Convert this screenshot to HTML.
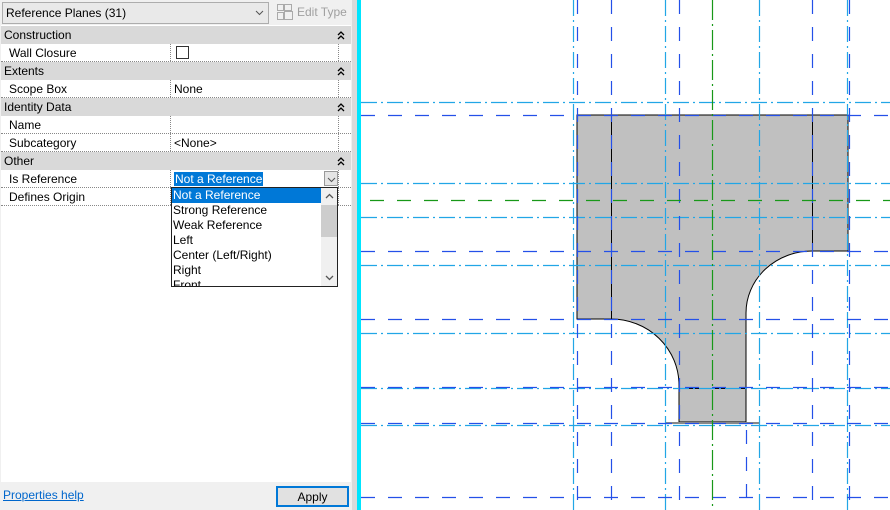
<!DOCTYPE html>
<html><head><style>
*{margin:0;padding:0;box-sizing:border-box}
body{width:890px;height:510px;overflow:hidden;background:#fff;font-family:"Liberation Sans",sans-serif;font-size:12px;color:#000;position:relative}
.a{position:absolute}
.hdr{position:absolute;left:1px;width:350px;height:18px;background:#d9d9d9;padding:2px 0 0 3px}
.hdr svg{position:absolute;right:6px;top:5px}
.row{position:absolute;left:1px;width:350px;height:18px;background:#fff;border-bottom:1px dotted #888}
.row .l{position:absolute;left:8px;top:2px}
.row .v{position:absolute;left:169px;top:0;height:17px;border-left:1px dotted #888;padding:2px 0 0 3px;width:168px}
.row .r{position:absolute;left:337px;top:0;height:17px;border-left:1px dotted #888;width:13px}
.dd div{height:15px;line-height:15px;padding-left:1px}
.lt{stroke:#22a6e6;stroke-width:1.2;stroke-dasharray:16 4 2 4;fill:none}
.dk{stroke:#2450e8;stroke-width:1.2;stroke-dasharray:14 13;fill:none}
.gr{stroke:#189818;stroke-width:1.2;stroke-dasharray:14 13;fill:none}
</style></head><body>
<div class="a" style="left:0;top:0;width:352px;height:510px;background:#f0f0f0"></div>
<div class="a" style="left:1px;top:25px;width:350px;height:457px;background:#fff"></div>
<div class="a" style="left:352px;top:0;width:5px;height:510px;background:#dadada"></div>
<div class="a" style="left:357px;top:0;width:4px;height:510px;background:#00e5ff"></div>
<div class="a" style="left:2px;top:2px;width:267px;height:22px;border:1px solid #adadad;background:#e9e9e9;padding:3px 0 0 3px">Reference Planes (31)<svg class="a" style="left:252px;top:7px" width="9" height="6"><path d="M1 1L4.5 4.5L8 1" fill="none" stroke="#555"/></svg></div>
<svg class="a" style="left:276px;top:3px" width="18" height="18"><rect x="1.5" y="1.5" width="6" height="6" fill="none" stroke="#aaa"/><rect x="1.5" y="9.5" width="6" height="7" fill="none" stroke="#aaa"/><rect x="8.5" y="1.5" width="7" height="6" fill="none" stroke="#aaa"/><rect x="8.5" y="8.5" width="8" height="8" fill="none" stroke="#aaa"/></svg>
<div class="a" style="left:297px;top:5px;color:#a0a0a0">Edit Type</div>

<div class="hdr" style="top:26px">Construction<svg width="8" height="9"><path d="M1 4L4 1L7 4M1 8L4 5L7 8" fill="none" stroke="#000" stroke-width="1.3"/></svg></div>
<div class="row" style="top:44px"><span class="l">Wall Closure</span><span class="v"><span class="a" style="left:5px;top:2px;width:13px;height:13px;border:1px solid #333"></span></span><span class="r"></span></div>
<div class="hdr" style="top:62px">Extents<svg width="8" height="9"><path d="M1 4L4 1L7 4M1 8L4 5L7 8" fill="none" stroke="#000" stroke-width="1.3"/></svg></div>
<div class="row" style="top:80px"><span class="l">Scope Box</span><span class="v">None</span><span class="r"></span></div>
<div class="hdr" style="top:98px">Identity Data<svg width="8" height="9"><path d="M1 4L4 1L7 4M1 8L4 5L7 8" fill="none" stroke="#000" stroke-width="1.3"/></svg></div>
<div class="row" style="top:116px"><span class="l">Name</span><span class="v"></span><span class="r"></span></div>
<div class="row" style="top:134px"><span class="l">Subcategory</span><span class="v">&lt;None&gt;</span><span class="r"></span></div>
<div class="hdr" style="top:152px">Other<svg width="8" height="9"><path d="M1 4L4 1L7 4M1 8L4 5L7 8" fill="none" stroke="#000" stroke-width="1.3"/></svg></div>
<div class="row" style="top:170px"><span class="l">Is Reference</span><span class="v"><span style="background:#0078d7;color:#fff;padding:0 1px">Not a Reference</span><span class="a" style="left:153px;top:1px;width:14px;height:15px;border:1px solid #999;background:#e5e5e5"><svg class="a" style="left:2px;top:5px" width="9" height="6"><path d="M1 1L4.5 4.5L8 1" fill="none" stroke="#555"/></svg></span></span><span class="r"></span></div>
<div class="row" style="top:188px"><span class="l">Defines Origin</span><span class="v"></span><span class="r"></span></div>

<div class="a dd" style="left:171px;top:187px;width:167px;height:100px;border:1px solid #222;background:#fff;overflow:hidden">
<div style="background:#0078d7;color:#fff;width:149px">Not a Reference</div>
<div>Strong Reference</div><div>Weak Reference</div><div>Left</div><div>Center (Left/Right)</div><div>Right</div><div>Front</div>
<div class="a" style="left:149px;top:0;width:16px;height:98px;background:#f0f0f0"></div>
<div class="a" style="left:149px;top:17px;width:16px;height:32px;background:#cdcdcd"></div>
<svg class="a" style="left:153px;top:5px" width="9" height="6"><path d="M1 5L4.5 1.5L8 5" fill="none" stroke="#555" stroke-width="1.3"/></svg>
<svg class="a" style="left:153px;top:87px" width="9" height="6"><path d="M1 1L4.5 4.5L8 1" fill="none" stroke="#555" stroke-width="1.3"/></svg>
</div>

<div class="a" style="left:3px;top:488px;color:#0066cc;text-decoration:underline">Properties help</div>
<div class="a" style="left:276px;top:486px;width:73px;height:21px;border:2px solid #0078d7;background:#e1e1e1;text-align:center;padding-top:2px">Apply</div>

<svg class="a" style="left:361px;top:0" width="529" height="510" viewBox="361 0 529 510">
<path d="M577 115H848V251H812A66 62 0 0 0 746 313V422H679V385A68 66 0 0 0 611 319H577Z" fill="#c0c0c0" stroke="#000" stroke-width="1"/>
<line x1="611.5" y1="115" x2="611.5" y2="319" stroke="#000"/>
<line x1="812.5" y1="115" x2="812.5" y2="251" stroke="#000"/>
<line x1="679" y1="388.5" x2="746" y2="388.5" stroke="#000"/>
<line x1="665" y1="423" x2="760" y2="423" stroke="#888" stroke-width="2"/>
<line class="lt" x1="361" y1="102.5" x2="890" y2="102.5"/><line class="lt" x1="361" y1="183.5" x2="890" y2="183.5"/><line class="lt" x1="361" y1="217.5" x2="890" y2="217.5"/><line class="lt" x1="361" y1="265.5" x2="890" y2="265.5"/><line class="lt" x1="361" y1="333.5" x2="890" y2="333.5"/><line class="lt" x1="361" y1="388.5" x2="890" y2="388.5"/><line class="lt" x1="361" y1="425.5" x2="890" y2="425.5"/>
<line class="lt" x1="573.5" y1="0" x2="573.5" y2="510"/><line class="lt" x1="665.5" y1="0" x2="665.5" y2="510"/><line class="lt" x1="759.5" y1="0" x2="759.5" y2="510"/><line class="lt" x1="847.5" y1="0" x2="847.5" y2="510"/>
<line class="dk" x1="361" y1="115.5" x2="890" y2="115.5"/><line class="dk" x1="361" y1="251.5" x2="890" y2="251.5"/><line class="dk" x1="361" y1="319.5" x2="890" y2="319.5"/><line class="dk" x1="361" y1="387.5" x2="890" y2="387.5"/><line class="dk" x1="361" y1="423.5" x2="890" y2="423.5"/><line class="dk" x1="361" y1="497.5" x2="890" y2="497.5"/>
<line class="dk" x1="577.5" y1="0" x2="577.5" y2="510"/><line class="dk" x1="611.5" y1="0" x2="611.5" y2="510"/><line class="dk" x1="679.5" y1="0" x2="679.5" y2="510"/><line class="dk" x1="812.5" y1="0" x2="812.5" y2="510"/><line class="dk" x1="849.5" y1="0" x2="849.5" y2="510"/><line class="dk" x1="746.5" y1="430" x2="746.5" y2="510"/>
<line class="gr" x1="370" y1="200.5" x2="890" y2="200.5"/><line class="gr" x1="712.5" y1="0" x2="712.5" y2="510" style="stroke-dasharray:20 4 2 4"/>
</svg>
</body></html>
